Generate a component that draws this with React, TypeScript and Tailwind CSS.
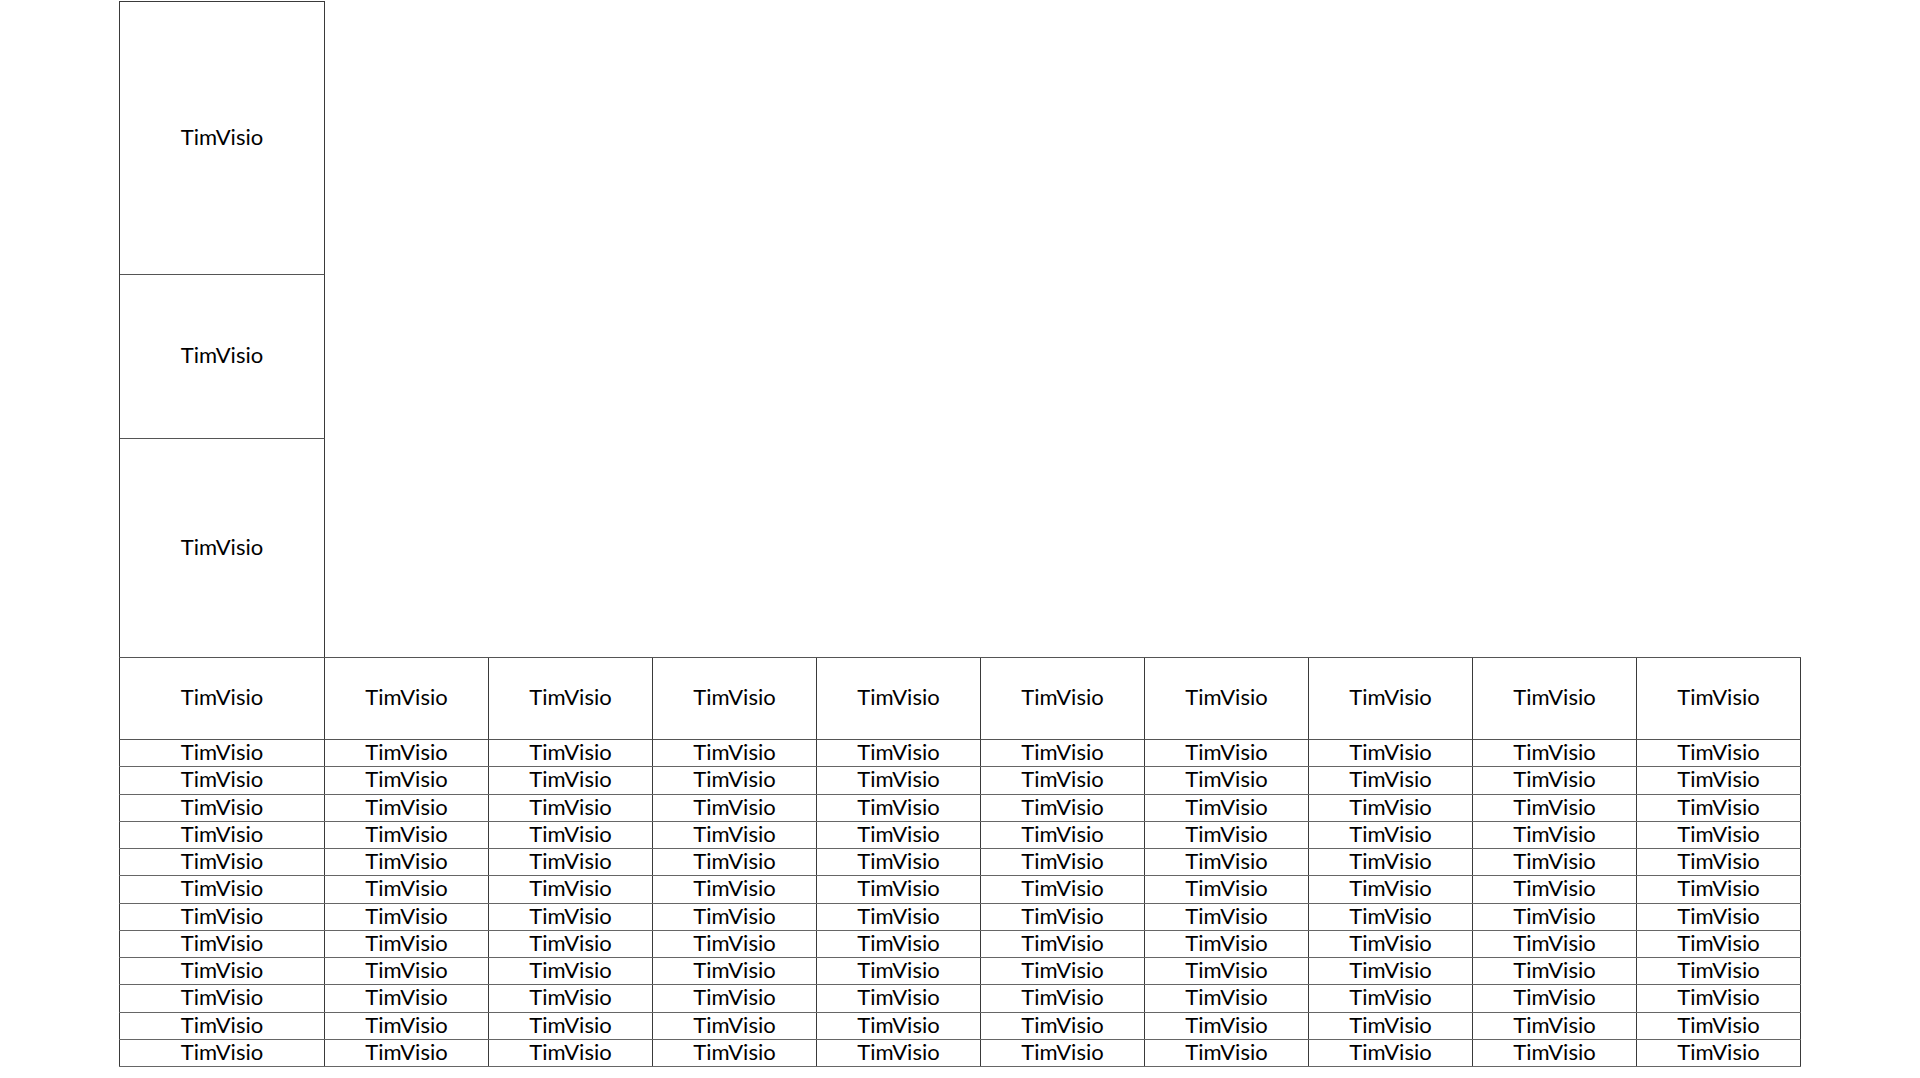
const cols = Array.from({ length: 9 });
const rows = Array.from({ length: 12 });

function Cell({ className }: { className: string }) {
  return (
    <div className={`flex items-center justify-center border-r border-[#3a3a3a] ${className}`}>
      TimVisio
    </div>
  );
}

export default function App() {
  return (
    <div className="min-h-screen w-full bg-white text-black pt-px text-[22px]" style={{ fontFamily: 'Lato, "Open Sans", sans-serif' }}>
      <div className="ml-[119px] w-[1682px]">
        {/* upper stacked cells in first column */}
        <div className="flex flex-col w-[206px] border-l border-t border-[#3a3a3a]">
          <Cell className="h-[273px] pb-[4px] border-b border-b-[#555]" />
          <Cell className="h-[164px] pb-[4px] border-b border-b-[#555]" />
          <Cell className="h-[218px] pb-[4px]" />
        </div>

        {/* header row */}
        <div className="flex border-t border-[#555]">
          <Cell className="w-[206px] h-[82px] pb-[4px] border-l border-b border-b-[#555]" />
          {cols.map((_, i) => (
            <Cell key={i} className="w-[164px] h-[82px] pb-[4px] border-b border-b-[#555]" />
          ))}
        </div>

        {/* data rows */}
        {rows.map((_, r) => (
          <div key={r} className="flex h-[27.25px] border-b border-[#666] leading-none">
            <Cell className="w-[206px] h-full pb-[2px] border-l border-l-[#3a3a3a]" />
            {cols.map((_, i) => (
              <Cell key={i} className="w-[164px] h-full pb-[2px]" />
            ))}
          </div>
        ))}
      </div>
    </div>
  );
}
